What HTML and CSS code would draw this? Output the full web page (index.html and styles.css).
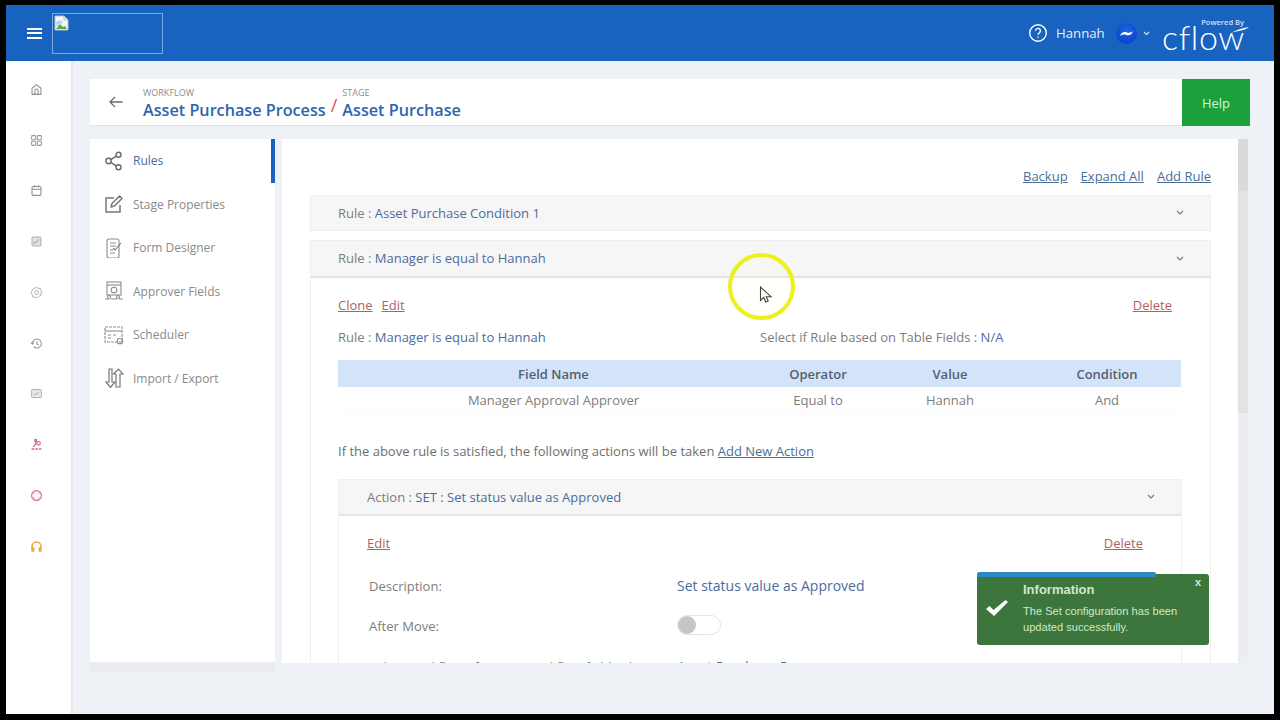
FILE: index.html
```html
<!DOCTYPE html>
<html>
    <head>
        <title>Asset Purchase - Rules</title>
        <link rel="stylesheet" href="styles.css">
    </head>
    <body>
        <div class="app">
            <header class="topbar">
                <button type="button" class="burger"><span></span><span></span><span></span></button>
                <div class="logo-box">
                    <svg width="15" height="16" viewBox="0 0 15 16"><path d="M1 1h9l4 4v10H1z" fill="#f4f6f8" stroke="#b9c4cf"/><path d="M10 1v4h4" fill="#dfe5ea" stroke="#b9c4cf"/><path d="M2 14l4-5 3 3 2-1 2 3z" fill="#5fa84a"/><path d="M2 8c2-3 5-3 7-1L3 12z" fill="#bcd3ee"/></svg>
                </div>
                <div class="top-right">
                    <svg class="help-ico" width="20" height="20" viewBox="0 0 20 20" fill="none" stroke="#fff" stroke-width="1.4"><circle cx="10" cy="10" r="8.3"/><path d="M7.6 7.8a2.4 2.4 0 1 1 3.7 2c-.9.6-1.3 1-1.3 2"/><path d="M10 13.6v1.2"/></svg>
                    <span class="user">Hannah</span>
                    <span class="avatar"><svg width="15" height="7" viewBox="0 0 15 7"><path d="M1 6c1.500-4 4-4.500 7-3.500 2.500.6 4.500 0 6-1.500-1 3.500-3.500 4.800-6.500 4C5 4.200 3 4.500 1 6z" fill="#fff"/></svg></span>
                    <svg class="user-chev" width="7" height="5" viewBox="0 0 7 5" fill="none" stroke="#cfe0f5" stroke-width="1.2"><path d="M1 1l2.500 2.500L6 1"/></svg>
                    <div class="cflow">
                        <span class="powered">Powered By</span>
                        <span class="cflow-name">cflow</span>
                        <svg class="swoosh" width="18" height="7" viewBox="0 0 18 7"><path d="M0 6C5 3 11 1 18 0c-2 2-5 3-8 3.500S3 5 0 6z" fill="#fff"/></svg>
                    </div>
                </div>
            </header>
            <div class="below">
                <nav class="rail">
                    <a class="rail-item"><svg viewBox="0 0 16 16" fill="none" stroke="#8f8f8f" stroke-width="1.3"><path d="M2.500 14V6.500L8 2l5.500 4.500V14z" stroke-linejoin="round"/><path d="M6 14V9.500a2 2 0 0 1 4 0V14"/></svg></a>
                    <a class="rail-item"><svg viewBox="0 0 16 16" fill="none" stroke="#999" stroke-width="1.3"><rect x="2" y="2" width="5" height="5" rx="1"/><rect x="9" y="2" width="5" height="5" rx="1"/><rect x="2" y="9" width="5" height="5" rx="1"/><rect x="9" y="9" width="5" height="5" rx="1"/></svg></a>
                    <a class="rail-item"><svg viewBox="0 0 16 16" fill="none" stroke="#8f8f8f" stroke-width="1.3"><rect x="2.500" y="3" width="11" height="11" rx="1.500"/><path d="M2.500 6.500h11M5.500 1.500V4M10.500 1.500V4"/></svg></a>
                    <a class="rail-item"><svg viewBox="0 0 16 16"><rect x="2.500" y="2.500" width="11" height="11" rx="1" fill="#e4e4e4" stroke="#9c9c9c"/><path d="M4.500 11l2-3 1.500 1.500L11 5" fill="none" stroke="#8a8a8a"/></svg></a>
                    <a class="rail-item"><svg viewBox="0 0 16 16" fill="none" stroke="#aeaeae" stroke-width="1.200"><circle cx="8" cy="8" r="2.500"/><path d="M8 1.500l2 1.500 2.500-.2.500 2.400 1.700 1.800L13.500 9l.2 2.500-2.400.7L9.500 14 8 14.500 6 13.800l-2.500-.3-.7-2.500L1.500 9l.8-2.300.5-2.500L5.300 3z"/></svg></a>
                    <a class="rail-item"><svg viewBox="0 0 16 16" fill="none" stroke="#9a9a9a" stroke-width="1.300"><path d="M3 8a5.500 5.500 0 1 1 1.700 4"/><path d="M1 6.500L3 8.800 5 6.500" /><path d="M8.500 5v3.500l2.300 1.300"/></svg></a>
                    <a class="rail-item"><svg viewBox="0 0 16 16"><rect x="2" y="3" width="12" height="10" rx="1" fill="#e8e8e8" stroke="#a0a0a0"/><path d="M5 10l2-2 1 1 3-3" fill="none" stroke="#909090"/></svg></a>
                    <a class="rail-item"><svg viewBox="0 0 16 16" fill="none" stroke="#d9648c" stroke-width="1.500"><circle cx="10.500" cy="6.500" r="2.200"/><path d="M6 2h2v2H6zM7 4v3L4 11"/><path d="M2 12.500h3.300v2H2zM6.400 12.500h3.300v2H6.400zM10.800 12.500h3.300v2h-3.300z" fill="#d9648c" stroke="none"/></svg></a>
                    <a class="rail-item"><svg viewBox="0 0 16 16" fill="none" stroke="#cf6f93" stroke-width="1.500"><circle cx="8" cy="8" r="6"/><path d="M3.500 3.500l2.500 2.500M12.500 3.500L10 6M3.500 12.500L6 10M12.500 12.500L10 10" stroke="#e6a9bf"/></svg></a>
                    <a class="rail-item"><svg viewBox="0 0 16 16"><path d="M2.500 10V8a5.500 5.500 0 0 1 11 0v2" fill="none" stroke="#e9ae3f" stroke-width="2"/><rect x="1.500" y="9" width="4" height="5.500" rx="1.200" fill="#e9ae3f"/><rect x="10.500" y="9" width="4" height="5.500" rx="1.200" fill="#e9ae3f"/></svg></a>
                </nav>
                <main class="main">
                    <section class="crumb">
                        <svg class="back" width="14" height="12" viewBox="0 0 14 12" fill="none" stroke="#6d6d6d" stroke-width="1.300"><path d="M13.500 6H1M6 1L1 6l5 5"/></svg>
                        <div class="crumb-part">
                            <span class="crumb-label">WORKFLOW</span>
                            <span class="crumb-title">Asset Purchase Process</span>
                        </div>
                        <span class="crumb-sep">/</span>
                        <div class="crumb-part">
                            <span class="crumb-label">STAGE</span>
                            <span class="crumb-title">Asset Purchase</span>
                        </div>
                        <button type="button" class="help-btn">Help</button>
                    </section>
                    <div class="panels">
                        <aside class="side">
                            <ul class="side-list">
                                <li class="side-item active">
                                    <svg width="20" height="20" viewBox="0 0 20 20" fill="none" stroke="#6a6a6a" stroke-width="1.400"><circle cx="4.500" cy="10" r="2.700"/><circle cx="14.500" cy="3.800" r="2.500"/><circle cx="14.500" cy="16.200" r="2.500"/><path d="M6.800 8.600l5.500-3.500M6.800 11.400l5.500 3.500"/></svg>
                                    <span>Rules</span>
                                </li>
                                <li class="side-item">
                                    <svg width="20" height="20" viewBox="0 0 20 20" fill="none" stroke="#777" stroke-width="1.500"><path d="M16 11v7H2V4h8"/><path d="M7 13l1-3.500L15.500 2 18 4.500 10.500 12z" stroke-linejoin="round"/></svg>
                                    <span>Stage Properties</span>
                                </li>
                                <li class="side-item">
                                    <svg width="20" height="20" viewBox="0 0 20 20" fill="none" stroke="#8d8d8d" stroke-width="1.100"><rect x="3" y="1" width="12" height="19" rx="2"/><path d="M6 5h6M6 8h6M6 12h3M6 15h5"/><path d="M9 10l2 2 6-7" stroke="#777"/></svg>
                                    <span>Form Designer</span>
                                </li>
                                <li class="side-item">
                                    <svg width="20" height="20" viewBox="0 0 20 20" fill="none" stroke="#8d8d8d" stroke-width="1.100"><rect x="3" y="1" width="14" height="13"/><path d="M3 4h14"/><circle cx="10" cy="9" r="2.800"/><path d="M1 18h4M7 18h6M15 18h4"/><circle cx="5" cy="16" r="1.500"/><circle cx="14" cy="16" r="1.500"/></svg>
                                    <span>Approver Fields</span>
                                </li>
                                <li class="side-item">
                                    <svg width="20" height="20" viewBox="0 0 20 20" fill="none" stroke="#8d8d8d" stroke-width="1.100"><rect x="1" y="2" width="17" height="15" stroke-dasharray="3 1"/><path d="M1 6h17"/><path d="M4 10h3M9 10h3M4 13h3"/><circle cx="16" cy="16" r="2.800"/></svg>
                                    <span>Scheduler</span>
                                </li>
                                <li class="side-item">
                                    <svg width="20" height="20" viewBox="0 0 20 20" fill="none" stroke="#777" stroke-width="1.200"><path d="M5 1v13H2l4.500 5.500L11 14H8V1z"/><path d="M12 19V6H9.500L14.500 1 19 6h-3v13z"/></svg>
                                    <span>Import / Export</span>
                                </li>
                            </ul>
                            <div class="side-foot"></div>
                        </aside>
                        <section class="content">
                            <div class="tools">
                                <a class="link">Backup</a>
                                <a class="link">Expand All</a>
                                <a class="link">Add Rule</a>
                            </div>
                            <div class="acc-head">
                                <span>Rule : <b class="val">Asset Purchase Condition 1</b></span>
                                <svg class="chev" width="8" height="5" viewBox="0 0 8 5" fill="none" stroke="#777" stroke-width="1.100"><path d="M1 1l3 3 3-3"/></svg>
                            </div>
                            <div class="acc-head open">
                                <span>Rule : <b class="val">Manager is equal to Hannah</b></span>
                                <svg class="chev" width="8" height="5" viewBox="0 0 8 5" fill="none" stroke="#777" stroke-width="1.100"><path d="M1 1l3 3 3-3"/></svg>
                            </div>
                            <div class="acc-body">
                                <div class="row-links">
                                    <div class="pair"><a class="link red">Clone</a><a class="link red">Edit</a></div>
                                    <a class="link red del">Delete</a>
                                </div>
                                <div class="rule-line">
                                    <span>Rule : <b class="val">Manager is equal to Hannah</b></span>
                                    <span class="table-flag">Select if Rule based on Table Fields : <b class="val">N/A</b></span>
                                </div>
                                <table class="rule-table">
                                    <thead>
                                        <tr><th class="c1">Field Name</th><th class="c2">Operator</th><th class="c3">Value</th><th>Condition</th></tr>
                                    </thead>
                                    <tbody>
                                        <tr><td>Manager Approval Approver</td><td>Equal to</td><td>Hannah</td><td>And</td></tr>
                                    </tbody>
                                </table>
                                <p class="note">If the above rule is satisfied, the following actions will be taken <a class="link">Add New Action</a></p>
                                <div class="action">
                                    <div class="action-head">
                                        <span>Action : <b class="val">SET : Set status value as Approved</b></span>
                                        <svg class="chev" width="8" height="5" viewBox="0 0 8 5" fill="none" stroke="#777" stroke-width="1.100"><path d="M1 1l3 3 3-3"/></svg>
                                    </div>
                                    <div class="action-body">
                                        <div class="row-links action-links">
                                            <a class="link red">Edit</a>
                                            <a class="link red">Delete</a>
                                        </div>
                                        <dl class="props">
                                            <dt>Description:</dt>
                                            <dd class="val big">Set status value as Approved</dd>
                                            <dt>After Move:</dt>
                                            <dd><span class="toggle"><span class="knob"></span></span></dd>
                                            <dt>Select workflow (if setting workflow field values):</dt>
                                            <dd class="val big">Asset Purchase Process</dd>
                                        </dl>
                                    </div>
                                </div>
                            </div>
                        </section>
                        <div class="scroll"><div class="thumb"></div></div>
                    </div>
                </main>
            </div>
            <div class="toast">
                <div class="toast-bar"></div>
                <svg class="toast-check" width="24" height="18" viewBox="0 0 24 18"><path d="M1 10l3.500-3 4 4L20.500 1 23 3 9 17z" fill="#fff"/></svg>
                <div class="toast-text">
                    <h4>Information</h4>
                    <p>The Set configuration has been updated successfully.</p>
                </div>
                <span class="toast-x">x</span>
            </div>
            <div class="cursor-ring"></div>
            <svg class="cursor" width="14" height="18" viewBox="0 0 14 18"><path d="M1.500 1v13.500l3.300-3 2 4.500 2.400-1-2-4.300H12z" fill="#fff" stroke="#444" stroke-width="1.100"/></svg>
        </div>
    </body>
</html>
```
FILE: styles.css
```css
*{
    box-sizing: border-box;
}

html, body{
    height: 100%;
    margin: 0;
}

body{
    background-color: #000;
    padding: 5px 6px 6px 6px;
    overflow: hidden;
    font-family: "Open Sans", "Liberation Sans", sans-serif;
    font-size: 13px;
    color: #7d7d7d;
}

.app{
    position: relative;
    width: 1268px;
    height: 709px;
    background-color: #eef1f5;
    display: flex;
    flex-direction: column;
    overflow: hidden;
}

.topbar{
    height: 56px;
    flex: none;
    background-color: #1763bf;
    display: flex;
    align-items: center;
    padding-left: 21px;
    padding-right: 26px;
}

.burger{
    width: 15px;
    height: 11px;
    padding: 0;
    border: 0;
    background: none;
    display: flex;
    flex-direction: column;
    justify-content: space-between;
}

.burger span{
    display: block;
    height: 2px;
    background-color: #fff;
}

.logo-box{
    width: 111px;
    height: 41px;
    margin-left: 10px;
    margin-top: 1px;
    border: 1px solid #7ba7de;
    padding: 1px;
    line-height: 0;
}

.top-right{
    margin-left: auto;
    display: flex;
    align-items: center;
    color: #fff;
}

.help-ico{
    margin-right: 8px;
}

.user{
    font-size: 13.2px;
    color: #e6eefa;
    width: 60px;
}

.avatar{
    width: 21px;
    height: 21px;
    border-radius: 50%;
    background: radial-gradient(circle at 50% 35%, #1c63e8, #0a38c4);
    display: flex;
    align-items: center;
    justify-content: center;
}

.user-chev{
    margin-left: 6px;
}

.cflow{
    position: relative;
    width: 85px;
    height: 42px;
    margin-left: 13px;
    margin-top: 2px;
}

.powered{
    position: absolute;
    right: 4px;
    top: 5px;
    font-size: 7.5px;
    line-height: 8px;
    font-weight: 600;
    color: #cfe0f5;
}

.cflow-name{
    position: absolute;
    left: -1px;
    top: 11px;
    font-family: "Lato", sans-serif;
    font-weight: 300;
    font-size: 34px;
    letter-spacing: 0.6px;
    line-height: 26px;
    color: #fff;
}

.swoosh{
    position: absolute;
    right: -1px;
    top: 14px;
}

.below{
    flex: 1;
    display: flex;
    min-height: 0;
}

.rail{
    width: 67px;
    flex: none;
    background-color: #fff;
    border-right: 2px solid #e3e6ea;
    padding-top: 3px;
}

.rail-item{
    height: 50.750px;
    display: flex;
    align-items: center;
    justify-content: center;
    padding-right: 5px;
}

.rail-item svg{
    width: 13px;
    height: 13px;
}

.main{
    flex: 1;
    padding: 18px 24px 0 17px;
    min-width: 0;
}

.crumb{
    height: 47px;
    background-color: #fff;
    border-bottom: 1px solid #dfe2e6;
    display: flex;
    align-items: center;
    padding-left: 19px;
}

.back{
    margin-right: 20px;
}

.crumb-part{
    display: flex;
    flex-direction: column;
    margin-top: 5px;
}

.crumb-label{
    font-size: 9px;
    line-height: 11px;
    color: #8c8c8c;
}

.crumb-title{
    font-size: 16.2px;
    font-weight: 600;
    line-height: 24px;
    color: #2d65ad;
}

.crumb-sep{
    color: #d9534f;
    font-size: 18px;
    margin: 6px 5px 0 5px;
    align-self: center;
}

.help-btn{
    margin-left: auto;
    width: 68px;
    height: 47px;
    border: 0;
    background-color: #1aa13c;
    color: #d8f3dd;
    font-family: inherit;
    font-size: 13px;
    align-self: flex-start;
}

.panels{
    display: flex;
    margin-top: 13px;
}

.side{
    width: 185px;
    flex: none;
    margin-right: 7px;
    display: flex;
    flex-direction: column;
    height: 533px;
    background-color: #fff;
}

.side-list{
    list-style: none;
    margin: 0;
    padding: 0;
    flex: 1;
}

.side-foot{
    height: 10px;
    background-color: #eaecef;
}

.side-item{
    height: 43.500px;
    display: flex;
    align-items: center;
    padding-left: 14px;
    gap: 9px;
    font-size: 12px;
    color: #8a8a8a;
}

.side-item.active{
    border-right: 4px solid #1763bf;
    color: #4a6a9c;
}

.content{
    width: 956px;
    height: 524px;
    flex: none;
    background-color: #fff;
    overflow: hidden;
    padding: 0 27px 0 28px;
}

.scroll{
    width: 10px;
    height: 524px;
    background-color: #ebedf0;
}

.thumb{
    height: 274px;
    background: linear-gradient(#d9dadc 0, #d9dadc 52px, #e2e3e5 52px);
}

.tools{
    height: 56px;
    padding-top: 28px;
    display: flex;
    justify-content: flex-end;
    gap: 13px;
    line-height: 18px;
}

.link{
    color: #4a6f96;
    text-decoration: underline;
}

.link.red{
    color: #b5605f;
}

.val{
    font-weight: 400;
    color: #4c6c9e;
}

.acc-head{
    height: 36px;
    background-color: #f6f6f6;
    border: 1px solid #efefef;
    display: flex;
    align-items: center;
    justify-content: space-between;
    padding: 0 26px 1px 27px;
    margin-bottom: 9px;
}

.acc-head.open{
    height: 38px;
    margin-bottom: 0;
    border-bottom: 2px solid #e4e4e4;
}

.acc-body{
    border-left: 1px solid #efefef;
    border-right: 1px solid #efefef;
    padding: 0 28px 0 27px;
}

.row-links{
    display: flex;
    justify-content: space-between;
    padding-top: 18px;
    line-height: 18px;
}

.pair{
    display: flex;
    gap: 9px;
}

.del{
    margin-right: 10px;
}

.rule-line{
    display: flex;
    margin-top: 14px;
    line-height: 18px;
}

.rule-line > span:first-child{
    width: 422px;
}

.rule-table{
    width: 843px;
    margin-top: 14px;
    border-collapse: collapse;
    table-layout: fixed;
    text-align: center;
}

.rule-table th{
    height: 27px;
    padding: 0;
    background-color: #d3e4fa;
    font-weight: 600;
    color: #55606e;
}

.rule-table td{
    height: 27px;
    padding: 0;
    border-bottom: 1px solid #fafafa;
}

.c1{
    width: 431px;
}

.c2{
    width: 98px;
}

.c3{
    width: 166px;
}

.note{
    margin: 27px 0 0 0;
    line-height: 18px;
    color: #6f6f6f;
}

.action{
    margin-top: 19px;
    width: 844px;
    border-left: 1px solid #efefef;
    border-right: 1px solid #efefef;
}

.action-head{
    height: 37px;
    background-color: #f6f6f6;
    border-top: 1px solid #efefef;
    border-bottom: 2px solid #e4e4e4;
    display: flex;
    align-items: center;
    justify-content: space-between;
    padding: 0 26px 0 28px;
}

.action-links{
    padding: 18px 38px 0 28px;
}

.props{
    margin: 19px 0 0 30px;
    display: grid;
    grid-template-columns: 308px 1fr;
    grid-template-rows: 39px 42px 39px;
    align-items: center;
}

.props dt{
    white-space: nowrap;
    margin-top: -9px;
}

.props dd{
    margin: -9px 0 0 0;
}

.big{
    font-size: 14px;
}

.toggle{
    display: block;
    width: 44px;
    height: 20px;
    border: 1px solid #e4e4e4;
    border-radius: 10px;
    padding: 0;
    margin-top: -3px;
}

.knob{
    display: block;
    width: 18px;
    height: 18px;
    border-radius: 50%;
    background-color: #c6c6c6;
}

.toast{
    position: absolute;
    left: 971px;
    top: 569px;
    width: 232px;
    height: 71px;
    background-color: #3c763d;
    border-radius: 3px;
    color: #d2e8c8;
    display: flex;
    font-family: "Liberation Sans", Arial, sans-serif;
}

.toast-bar{
    position: absolute;
    left: 0;
    top: -2px;
    width: 179px;
    height: 5px;
    background-color: #2f86c6;
    border-radius: 2px 2px 0 0;
}

.toast-check{
    margin: 25px 0 0 8px;
    flex: none;
}

.toast-text{
    margin-left: 14px;
    width: 170px;
}

.toast-text h4{
    margin: 8px 0 6px 0;
    font-size: 13px;
    line-height: 15px;
    font-weight: bold;
}

.toast-text p{
    margin: 0;
    font-size: 11.100px;
    line-height: 16px;
}

.toast-x{
    position: absolute;
    right: 8px;
    top: 2px;
    font-size: 11px;
    font-weight: bold;
}

.cursor-ring{
    position: absolute;
    left: 722px;
    top: 248px;
    width: 67px;
    height: 67px;
    border-radius: 50%;
    border: 4px solid #eef01e;
    background-color: rgba(255, 255, 200, 0.08);
}

.cursor{
    position: absolute;
    left: 753px;
    top: 281px;
}
```
